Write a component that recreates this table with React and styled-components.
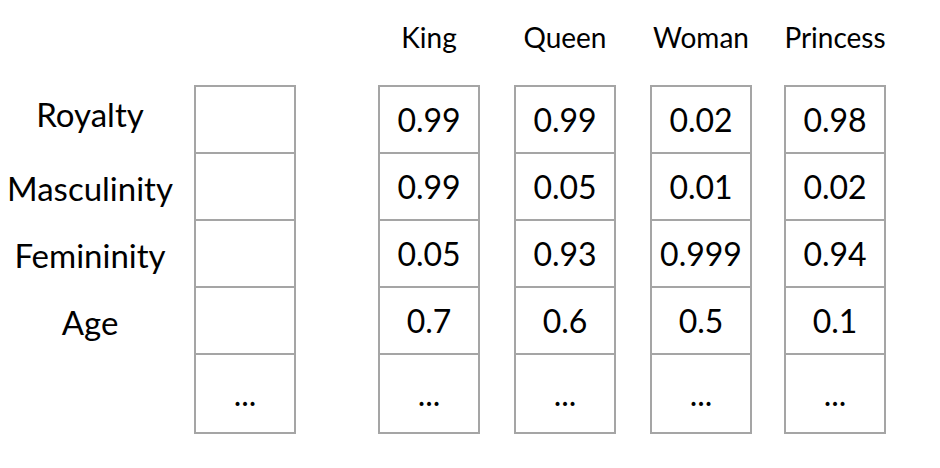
import styled, { createGlobalStyle } from "styled-components"

const GlobalStyle = createGlobalStyle`
  html, body {
    margin: 0;
    padding: 0;
    background: #fff;
  }
  body {
    font-family: Lato, "Liberation Sans", sans-serif;
    color: #000;
  }
`

const labels = [
  { name: "Royalty", shift: -7 },
  { name: "Masculinity", shift: 0 },
  { name: "Femininity", shift: 0 },
  { name: "Age", shift: 0 },
]

const words = [
  { name: "King", values: ["0.99", "0.99", "0.05", "0.7"] },
  { name: "Queen", values: ["0.99", "0.05", "0.93", "0.6"] },
  { name: "Woman", values: ["0.02", "0.01", "0.999", "0.5"] },
  { name: "Princess", values: ["0.98", "0.02", "0.94", "0.1"] },
]

const Page = styled.main`
  display: flex;
  align-items: flex-start;
  width: 940px;
  height: 468px;
  box-sizing: border-box;
`

const Column = styled.section`
  display: flex;
  flex-direction: column;
  width: ${(p) => p.$width}px;
  margin-right: ${(p) => p.$gap}px;
`

const Header = styled.header`
  height: 85px;
  box-sizing: border-box;
  padding-top: 20px;
  font-size: 28px;
  line-height: 34px;
  text-align: center;
`

const LabelList = styled.ul`
  list-style: none;
  margin: 0;
  padding: 2px 0 0;
`

const Label = styled.li`
  height: 67px;
  display: flex;
  align-items: center;
  justify-content: center;
  font-size: 33px;
  transform: translateY(${(p) => p.$shift}px);
`

const Vector = styled.div`
  display: flex;
  flex-direction: column;
  border: 2px solid #a5a5a5;
`

const Cell = styled.div`
  height: ${(p) => (p.$last ? 77 : 65)}px;
  display: flex;
  align-items: center;
  justify-content: center;
  font-size: 32px;
  border-bottom: ${(p) => (p.$last ? "none" : "2px solid #a5a5a5")};
`

const VectorCells = ({ values }) => (
  <Vector>
    {values.map((v, i) => (
      <Cell key={i}>{v}</Cell>
    ))}
    <Cell $last>...</Cell>
  </Vector>
)

const App = () => {
  return (
    <Page>
      <GlobalStyle />
      <Column $width={180} $gap={14}>
        <Header />
        <LabelList>
          {labels.map((l) => (
            <Label key={l.name} $shift={l.shift}>
              {l.name}
            </Label>
          ))}
        </LabelList>
      </Column>
      <Column $width={102} $gap={82}>
        <Header />
        <VectorCells values={["", "", "", ""]} />
      </Column>
      {words.map((w, i) => (
        <Column key={w.name} $width={102} $gap={i === 2 ? 32 : 34}>
          <Header>{w.name}</Header>
          <VectorCells values={w.values} />
        </Column>
      ))}
    </Page>
  )
}

export default App
